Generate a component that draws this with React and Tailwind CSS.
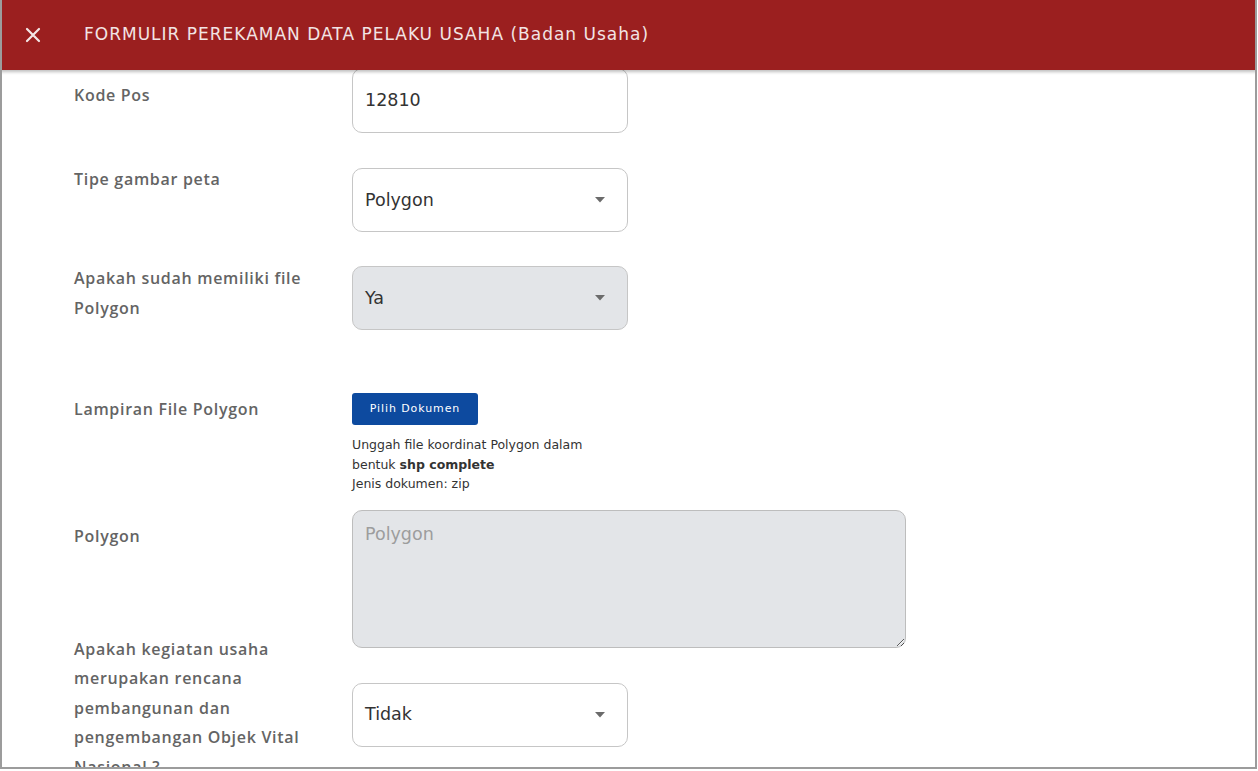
import React from "react";

function Caret() {
  return (
    <svg width="10" height="6" viewBox="0 0 10 6" className="shrink-0">
      <path d="M0 0 L10 0 L5 5.5 Z" fill="#6b6b6b" />
    </svg>
  );
}

const labelFont = { fontFamily: '"Open Sans", "Liberation Sans", sans-serif' };
const mont = { fontFamily: '"DejaVu Sans", "Liberation Sans", sans-serif' };

function Select({ value, gray }) {
  return (
    <div
      className={`w-[276px] h-[64px] rounded-[10px] border border-[#c6c6c6] flex items-center justify-between pl-[12px] pr-[22px] ${
        gray ? "bg-[#e3e5e8]" : "bg-white"
      }`}
    >
      <span className="text-[17.5px] text-[#333333]" style={mont}>
        {value}
      </span>
      <Caret />
    </div>
  );
}

function Label({ children, className = "" }) {
  return (
    <div
      className={`w-[278px] shrink-0 text-[16px] leading-[29.5px] font-semibold tracking-[0.7px] text-[#646464] ${className}`}
      style={labelFont}
    >
      {children}
    </div>
  );
}

export default function App() {
  return (
    <div className="w-[1258px] h-[771px] overflow-hidden bg-white">
      <div className="w-[1257px] h-[769px] border-l-2 border-r-2 border-b-2 border-[#9c9c9c] relative overflow-hidden flex flex-col">
        <div className="h-[70px] shrink-0 bg-[#9b1f1f] flex items-center shadow-[0_2px_3px_rgba(0,0,0,0.25)] relative z-10 -ml-[2px] -mr-[2px]">
          <svg width="16" height="16" viewBox="0 0 16 16" className="ml-[25px]">
            <path d="M2 2 L14 14 M14 2 L2 14" stroke="#f3e6e6" strokeWidth="2.2" strokeLinecap="round" />
          </svg>
          <span className="ml-[43px] text-[17px] text-[#f2e4e4] tracking-[1px]" style={mont}>
            FORMULIR PEREKAMAN DATA PELAKU USAHA (Badan Usaha)
          </span>
        </div>
        <div className="flex flex-col pl-[72px] -mt-[2px]">
          {/* Kode Pos */}
          <div className="flex">
            <Label className="pt-[13px]">Kode Pos</Label>
            <div className="w-[276px] h-[65px] rounded-[10px] border border-[#c6c6c6] bg-white flex items-center pl-[12px]">
              <span className="text-[17.5px] text-[#333333]" style={mont}>12810</span>
            </div>
          </div>
          {/* Tipe gambar peta */}
          <div className="flex mt-[35px]">
            <Label className="-mt-[3px]">Tipe gambar peta</Label>
            <Select value="Polygon" />
          </div>
          {/* Apakah sudah memiliki file Polygon */}
          <div className="flex mt-[34px]">
            <Label className="-mt-[2px]">
              Apakah sudah memiliki file
              <br />
              Polygon
            </Label>
            <Select value="Ya" gray />
          </div>
          {/* Lampiran */}
          <div className="flex mt-[63px]">
            <Label className="pt-[2px]">Lampiran File Polygon</Label>
            <div className="flex flex-col">
              <button
                className="w-[126px] h-[32px] rounded-[3px] bg-[#0d4a9f] text-white text-[11px] tracking-[0.9px]"
                style={mont}
              >
                Pilih Dokumen
              </button>
              <div className="mt-[10px] text-[12.5px] leading-[19.5px] text-[#333333]" style={mont}>
                Unggah file koordinat Polygon dalam
                <br />
                bentuk <span className="font-bold">shp complete</span>
                <br />
                Jenis dokumen: zip
              </div>
            </div>
          </div>
          {/* Polygon textarea */}
          <div className="flex mt-[16px]">
            <Label className="pt-[12px]">Polygon</Label>
            <textarea
              readOnly
              placeholder="Polygon"
              className="w-[554px] h-[138px] rounded-[10px] border border-[#bdbdbd] bg-[#e3e5e8] pl-[12px] pt-[10px] text-[17.5px] text-[#333] placeholder:text-[#9d9d9d] outline-none resize"
              style={mont}
            />
          </div>
          {/* Objek Vital */}
          <div className="flex items-start -mt-[13px]">
            <Label>
              Apakah kegiatan usaha
              <br />
              merupakan rencana
              <br />
              pembangunan dan
              <br />
              pengembangan Objek Vital
              <br />
              Nasional ?
            </Label>
            <div className="mt-[48px]">
              <Select value="Tidak" />
            </div>
          </div>
        </div>
      </div>
    </div>
  );
}
